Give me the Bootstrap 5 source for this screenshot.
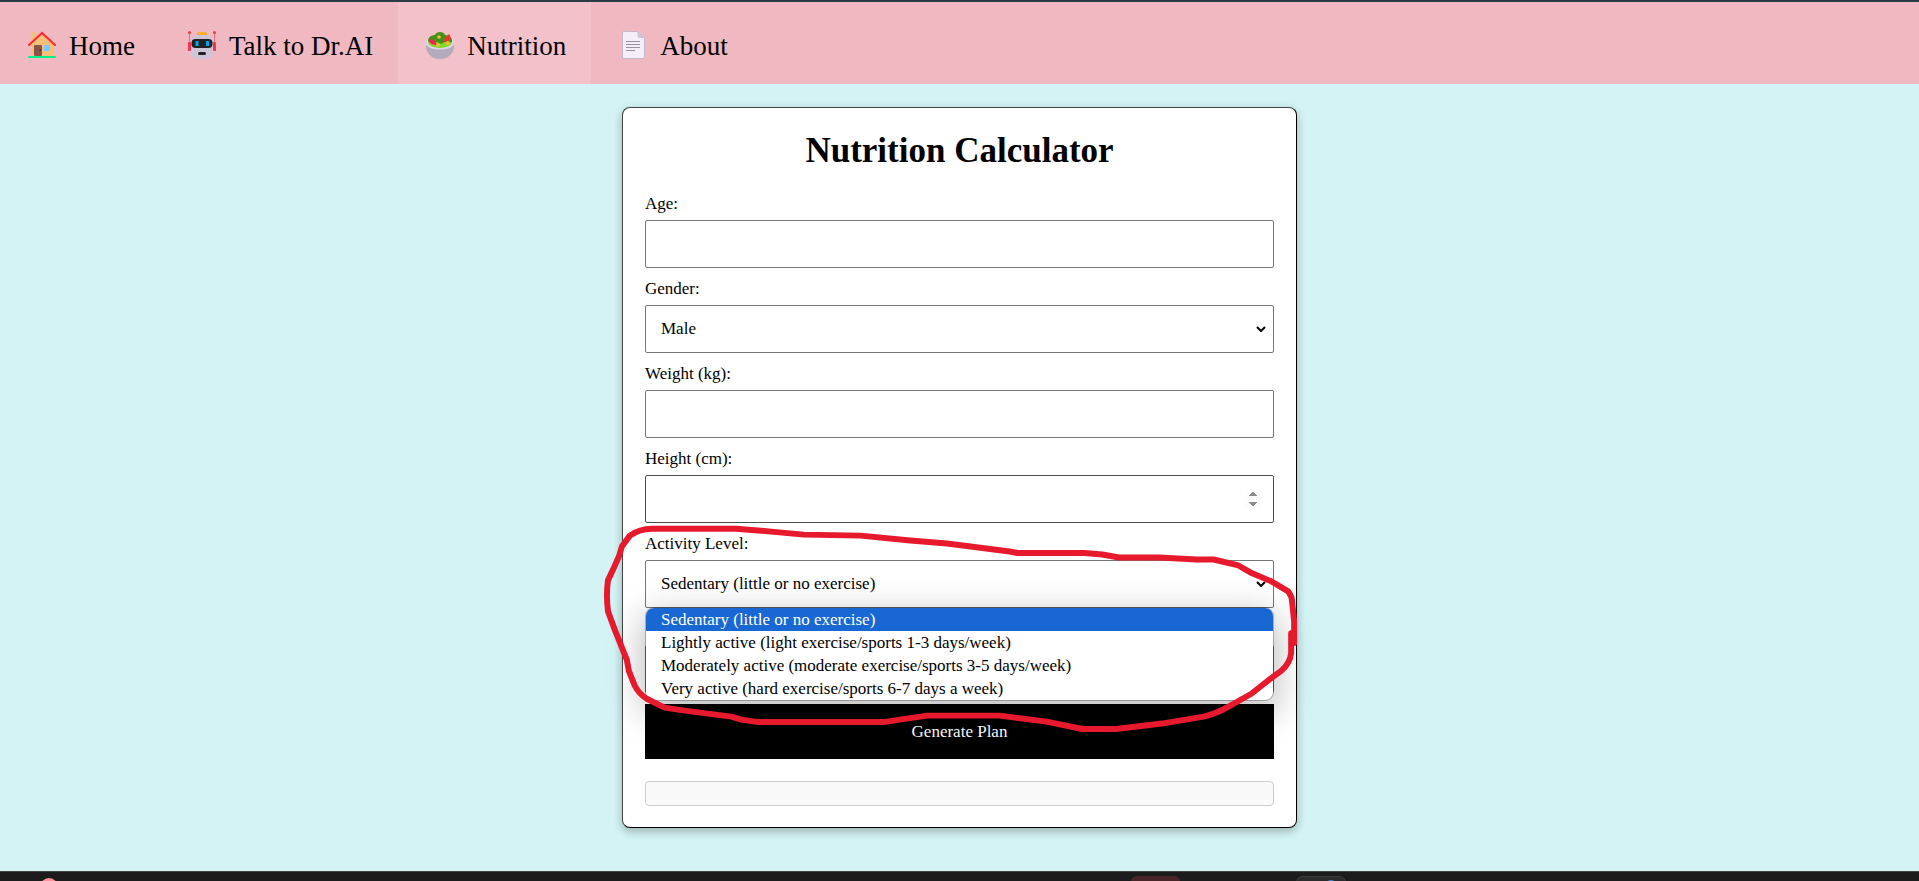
<!DOCTYPE html>
<html lang="en">
<head>
<meta charset="utf-8">
<meta name="viewport" content="width=device-width, initial-scale=1">
<title>Nutrition Calculator</title>
<link href="https://cdn.jsdelivr.net/npm/bootstrap@5.3.0/dist/css/bootstrap.min.css" rel="stylesheet">
<style>
  body { background: #d4f3f5; color: #000; font-family: "Liberation Serif", serif; font-size: 17px; line-height: 24px; }
  .site-nav { background: #f0b8c1; border-top: 2px solid #2b3c44; }
  .site-nav .nav-link { color: #000; font-size: 27px; line-height: 34px; padding: 27px 25px 21px 28px; gap: 13px; }
  .site-nav .nav-link.active { background: #f3c1ca; }
  .site-nav svg { width: 28px; height: 28px; margin-top: -2px; }
  .calc-area { padding: 23px 12px 40px; }
  .calc-card { max-width: 675px; padding: 16px 22px 21px; background: #fff; border: 1px solid #000; border-color: #444 #000 #000 #444; border-radius: 8px; box-shadow: 0 4px 8px rgba(0,0,0,.2), 0 2px 12px rgba(0,0,0,.08); }
  .calc-title { font-size: 35px; line-height: 54px; font-weight: 700; margin-bottom: 14px; }
  .field { padding-bottom: 9px; }
  .field label { line-height: 24px; margin-bottom: 4px; }
  .field .form-control, .field .form-select { height: 48px; padding: 0 15px; font-size: 17px; color: #000; background-color: #fff; border: 1px solid #767676; border-radius: 2px; }
  .field .form-control { padding-right: 12px; }
  .field .form-select { background-image: url("data:image/svg+xml,%3Csvg xmlns='http://www.w3.org/2000/svg' viewBox='0 0 10 6'%3E%3Cpath d='M1 1l4 4 4-4' fill='none' stroke='%23000' stroke-width='2'/%3E%3C/svg%3E"); background-size: 10px 6px; background-position: right 7px center; }
  .field .is-hovered { border-color: #4d4d4d; }
  .is-hovered::-webkit-inner-spin-button { opacity: 1; }
  .option-list { top: 100%; left: 1px; right: 1px; z-index: 2; background: #fff; border-radius: 8px; overflow: hidden; box-shadow: 0 0 0 1px rgba(0,0,0,.25), 0 10px 34px 4px rgba(0,0,0,.26); }
  .option-list li { line-height: 23px; padding: 0 15px; }
  .option-list .chosen { background: #1967d2; color: #fff; }
  .plan-btn { background: #000; color: #fff; font-size: 17px; height: 55px; margin-top: 2px; }
  .plan-btn:hover { background: #222; color: #fff; }
  .result-box { height: 25px; margin-top: 22px; background: #f9f9f9; border: 1px solid #ccc; border-radius: 4px; }
  .marker { inset: 0; z-index: 3; overflow: visible; pointer-events: none; }
  .taskbar { height: 10px; background: #1c1c1c; border-top: 1px solid #444; }
  .taskbar svg { height: 9px; }
</style>
</head>
<body>
<div class="min-vh-100 d-flex flex-column">
  <nav class="site-nav">
    <ul class="nav">
      <li class="nav-item"><a class="nav-link d-flex align-items-center" href="#">
        <svg viewBox="0 0 28 28" aria-hidden="true"><path d="M4 1h4v8H4z" fill="#f3c07a"/><path d="M3 13 14 3l11 10v13H3z" fill="#f3c07a"/><path d="M1 14 14 2l13 12" fill="none" stroke="#ff2d2d" stroke-width="2.2" stroke-linecap="round"/><rect x="6" y="14" width="8" height="11" rx="1" fill="#8a5346"/><circle cx="12.300" cy="19" r=".8" fill="#3c2020"/><rect x="16" y="14" width="6" height="6" fill="#7ec8ff"/><rect y="25" width="28" height="2" rx="1" fill="#00f08a"/></svg>
        Home</a></li>
      <li class="nav-item"><a class="nav-link d-flex align-items-center" href="#">
        <svg viewBox="0 0 28 28" aria-hidden="true"><path d="M1.500 1.500V20M26.500 1.500V20" stroke="#ef6a77"/><circle cx="1.500" cy="1.500" r="1.500" fill="#f5354a"/><circle cx="26.500" cy="1.500" r="1.500" fill="#f5354a"/><rect x="0" y="11" width="3" height="9" rx="1" fill="#f5354a"/><rect x="25" y="11" width="3" height="9" rx="1" fill="#f5354a"/><rect x="9" y="1" width="10" height="5" rx="1.500" fill="#ffae2e"/><rect x="3" y="4" width="22" height="24" rx="6" fill="#cdc4d6"/><rect x="3.500" y="8" width="21" height="9" rx="4" fill="#212121"/><rect x="7.500" y="10" width="3" height="5" fill="#00a6ed"/><rect x="18" y="10" width="3" height="5" fill="#00a6ed"/><rect x="10" y="21" width="8" height="3" rx="1.500" fill="#212121"/></svg>
        Talk to Dr.AI</a></li>
      <li class="nav-item"><a class="nav-link active d-flex align-items-center" aria-current="page" href="#">
        <svg viewBox="0 0 28 28" aria-hidden="true"><path d="M0 11h28v3c0 8-6 14-14 14S0 22 0 14z" fill="#b4acbc"/><ellipse cx="14" cy="11" rx="14" ry="7.500" fill="#e0d9e8"/><ellipse cx="14" cy="11" rx="12" ry="6" fill="#86d72f"/><path d="M2 10c0-4 4-6 7-6 1-4 9-4 10 0 4 0 8 3 7 7-5 1-7-1-9 1-3 2-4-1-7-1-3 1-7 1-8-1z" fill="#44911b"/><path d="M3 9c3-2 6 0 8 5-4 0-8-1-8-5z" fill="#f8224c"/><path d="M23 3c2 2 2 5 1 6l-6 2c0-4 2-5 5-8z" fill="#f8312f"/><circle cx="13" cy="6" r="1.800" fill="#ffb92e"/><circle cx="12" cy="14" r="1.800" fill="#ffb92e"/><circle cx="22" cy="12" r="2" fill="#ffb92e"/><path d="M0 12c1 4 6 6 14 6s13-2 14-6c1 10-6 16-14 16S-1 22 0 12z" fill="#b4acbc"/><path d="M0 12c1 4 6 6 14 6s13-2 14-6" fill="none" stroke="#e0d9e8"/></svg>
        Nutrition</a></li>
      <li class="nav-item"><a class="nav-link d-flex align-items-center" href="#">
        <svg viewBox="0 0 28 28" aria-hidden="true"><path d="M5 .5h13L25.500 7v19a1.500 1.500 0 0 1-1.500 1.500H5A1.500 1.500 0 0 1 3.500 26V2A1.500 1.500 0 0 1 5 .5z" fill="#f3eef8" stroke="#c4b8cc"/><path d="M18.500.5V5A2 2 0 0 0 20.500 7h5z" fill="#cdc4d6"/><path d="M7 10.500h14M7 13.500h14M7 16.500h14M7 19.500h9" stroke="#998ea4"/></svg>
        About</a></li>
    </ul>
  </nav>

  <main class="calc-area flex-grow-1">
    <form class="calc-card position-relative mx-auto w-100">
      <h1 class="calc-title text-center">Nutrition Calculator</h1>
      <div class="field"><label class="d-block" for="age">Age:</label><input class="form-control" type="number" id="age"></div>
      <div class="field"><label class="d-block" for="gender">Gender:</label><select class="form-select" id="gender"><option>Male</option><option>Female</option></select></div>
      <div class="field"><label class="d-block" for="weight">Weight (kg):</label><input class="form-control" type="number" id="weight"></div>
      <div class="field"><label class="d-block" for="height">Height (cm):</label><input class="form-control is-hovered" type="number" id="height"></div>
      <div class="field">
        <label class="d-block" for="activity">Activity Level:</label>
        <div class="position-relative">
          <select class="form-select" id="activity"><option>Sedentary (little or no exercise)</option></select>
          <ul class="option-list list-unstyled position-absolute mb-0" role="listbox" aria-label="Activity Level">
            <li class="chosen" role="option" aria-selected="true">Sedentary (little or no exercise)</li>
            <li role="option">Lightly active (light exercise/sports 1-3 days/week)</li>
            <li role="option">Moderately active (moderate exercise/sports 3-5 days/week)</li>
            <li role="option">Very active (hard exercise/sports 6-7 days a week)</li>
          </ul>
        </div>
      </div>
      <div class="field"><div class="pt-4 mt-1"><select class="form-select" id="goal" aria-label="Goal"></select></div></div>
      <button class="plan-btn btn rounded-0 border-0 w-100 d-block" type="button">Generate Plan</button>
      <div class="result-box"></div>
      <svg class="marker position-absolute w-100 h-100" viewBox="622 107 675 723" aria-hidden="true"><path fill="none" stroke="#e6192d" stroke-width="6" stroke-linejoin="round" stroke-linecap="round" d="M650 530H735L770 533 803 536 860 537 910 542 947 545 1010 553 1018 554.500H1085L1103 556 1120 559H1160L1198 561H1215L1240 567 1252 574 1273 583 1290 593Q1294 598 1294 604L1296 623V645L1293 635V655Q1292 665 1283 673L1272 681 1253 696 1230 709Q1218 716 1205 719L1163 726 1117 731.500H1083L1047 724 1000 718H927L903 721.500 883 724.500H757L740 722 730 719 683 713 663 710 645 701Q637 696 633 688L627 673 625 662 613 632 606 613Q604 597 606 582L613 567Q618 557 620 548L628 537Q638 530 650 530"/></svg>
    </form>
  </main>

  <footer class="taskbar d-flex overflow-hidden">
    <svg class="w-100" viewBox="0 0 1919 9" preserveAspectRatio="xMinYMin slice" aria-hidden="true"><circle cx="49" cy="15" r="9" fill="#ff8f9c"/><rect x="1131" y="4" width="49" height="20" rx="6" fill="#4a2527"/><rect x="1296.500" y="4.500" width="49" height="20" rx="6" fill="#2b2b2b" stroke="#3c3c3c"/><circle cx="1331" cy="14" r="6" fill="#4285d4"/></svg>
  </footer>
</div>
<script src="https://cdn.jsdelivr.net/npm/bootstrap@5.3.0/dist/js/bootstrap.bundle.min.js"></script>
</body>
</html>
